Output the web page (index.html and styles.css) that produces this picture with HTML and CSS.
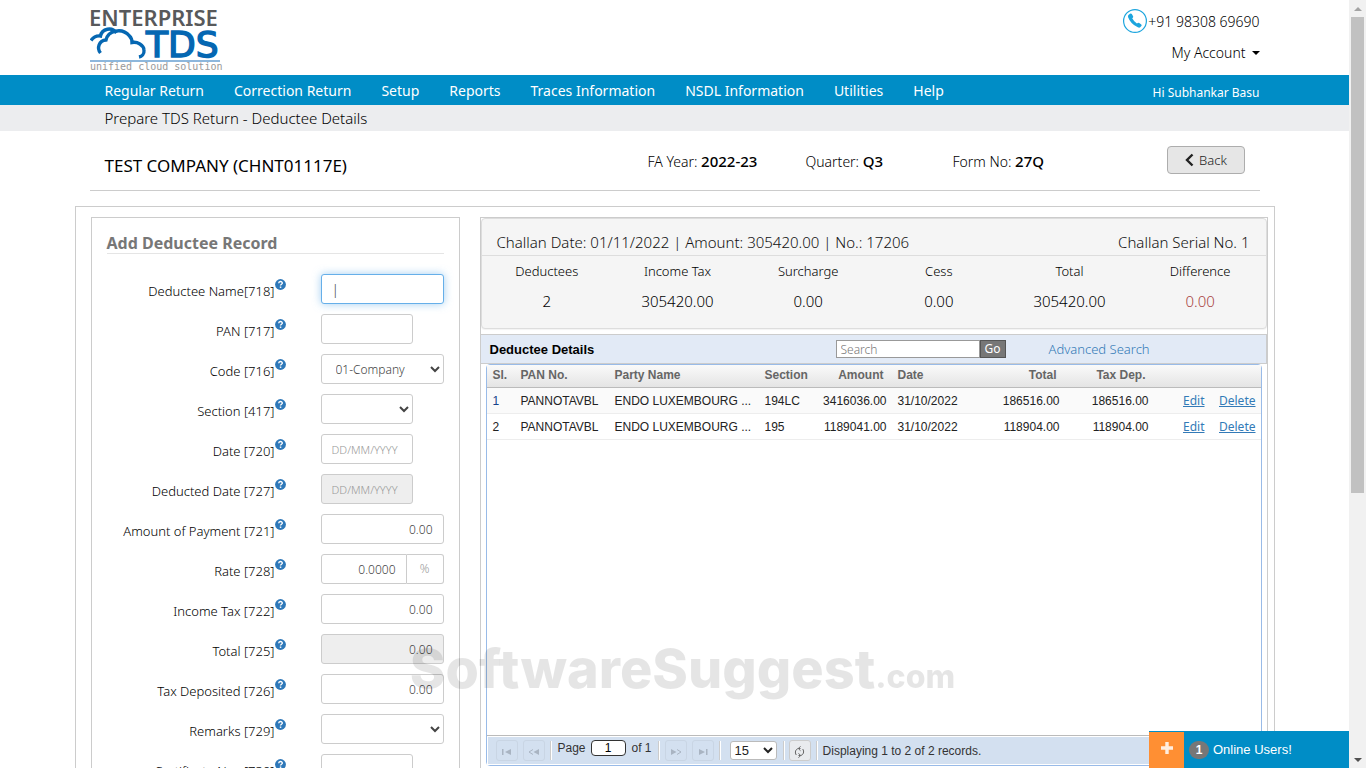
FILE: index.html
```html
<!DOCTYPE html>
<html lang="en">

<head>
    <meta charset="UTF-8">
    <meta name="viewport" content="width=device-width, initial-scale=1.0">
    <title>Prepare TDS Return - Deductee Details</title>
    <link rel="stylesheet" href="styles.css">
</head>

<body>
    <!-- shared icons -->
    <svg class="sprite" aria-hidden="true">
        <symbol id="help" viewBox="0 0 11 11">
            <circle cx="5.5" cy="5.5" r="5.4" fill="#2e78b9" />
            <path d="M3.7 4.3C3.7 2 7.4 2 7.3 4.2C7.2 5.3 5.5 5.2 5.5 6.6" fill="none" stroke="#fff" stroke-width="1.4" />
            <rect x="4.8" y="7.5" width="1.5" height="1.4" fill="#fff" />
        </symbol>
    </svg>

    <div class="page">
        <header class="container header">
            <a href="#" class="logo" aria-label="Enterprise TDS">
                <svg width="136" height="74" viewBox="0 0 136 74">
                    <text class="logo-name" x="-1" y="26">ENTERPRISE</text>
                    <text class="logo-tds" x="56" y="57">TDS</text>
                    <g transform="translate(0 6)" fill="none" stroke="#0567b2" stroke-width="3.4">
                        <path d="M1 34.500C3 31.500 6.500 29.500 10.500 30C12 22.500 22 20.500 26.500 27" />
                        <path d="M10.500 47C6.500 42 9 34.500 16 34C18 24.500 32 21 39.500 30C41 31.500 42 34 42 36.500C47.500 35.500 53.500 39 54 44C54.500 48 51.500 50.500 49 51" />
                    </g>
                    <rect x="0" y="60" width="130" height="2" fill="#8db7dc" />
                    <text class="logo-tag" x="0" y="70">unified cloud solution</text>
                </svg>
            </a>
            <div class="contact">
                <div class="phone">
                    <svg width="26" height="26" viewBox="0 0 26 26">
                        <circle cx="13" cy="13" r="11.400" fill="none" stroke="#1ca5de" stroke-width="1.200" />
                        <path d="M7 6.500L8.500 5.500Q9.300 5.200 9.800 6L11.100 8.200Q11.500 9 10.800 9.700L10.200 10.300Q11.800 13.500 14.900 15.600L15.800 15Q16.500 14.500 17.200 15L19.300 16.500Q20 17.200 19.400 18L18.200 19.300Q17.300 20 15.800 19.300Q8.500 16 6 9Q5.700 7.400 7 6.500Z" fill="#1ca5de" />
                    </svg>
                    <span>+91 98308 69690</span>
                </div>
                <a href="#" class="account">My Account <span class="caret"></span></a>
            </div>
        </header>

        <nav class="navbar">
            <div class="container nav-inner">
                <a href="#">Regular Return</a>
                <a href="#">Correction Return</a>
                <a href="#">Setup</a>
                <a href="#">Reports</a>
                <a href="#">Traces Information</a>
                <a href="#">NSDL Information</a>
                <a href="#">Utilities</a>
                <a href="#">Help</a>
                <span class="hello">Hi Subhankar Basu</span>
            </div>
        </nav>

        <div class="crumb">
            <div class="container">Prepare TDS Return - Deductee Details</div>
        </div>

        <div class="container company">
            <h1>TEST COMPANY (CHNT01117E)</h1>
            <div class="fact">FA Year: <b>2022-23</b></div>
            <div class="fact">Quarter: <b>Q3</b></div>
            <div class="fact">Form No: <b>27Q</b></div>
            <button type="button" class="back">
                <svg width="10" height="14" viewBox="0 0 10 14"><path d="M8.500 1.500L3 7L8.500 12.500" fill="none" stroke="#222" stroke-width="2.400" /></svg>
                Back
            </button>
        </div>

        <main class="box">
            <form class="record">
                <h2>Add Deductee Record</h2>
                <div class="row">
                    <label for="name">Deductee Name[718]</label><svg class="help"><use href="#help" /></svg>
                    <input type="text" id="name" class="field focused" value="|">
                </div>
                <div class="row">
                    <label for="pan">PAN [717]</label><svg class="help"><use href="#help" /></svg>
                    <input type="text" id="pan" class="field short">
                </div>
                <div class="row">
                    <label for="code">Code [716]</label><svg class="help"><use href="#help" /></svg>
                    <select id="code" class="field"><option>01-Company</option></select>
                </div>
                <div class="row">
                    <label for="section">Section [417]</label><svg class="help"><use href="#help" /></svg>
                    <select id="section" class="field short"><option></option></select>
                </div>
                <div class="row">
                    <label for="date">Date [720]</label><svg class="help"><use href="#help" /></svg>
                    <input type="text" id="date" class="field short" placeholder="DD/MM/YYYY">
                </div>
                <div class="row">
                    <label for="ded-date">Deducted Date [727]</label><svg class="help"><use href="#help" /></svg>
                    <input type="text" id="ded-date" class="field short" placeholder="DD/MM/YYYY" disabled>
                </div>
                <div class="row">
                    <label for="amount">Amount of Payment [721]</label><svg class="help"><use href="#help" /></svg>
                    <input type="text" id="amount" class="field num" value="0.00">
                </div>
                <div class="row">
                    <label for="rate">Rate [728]</label><svg class="help"><use href="#help" /></svg>
                    <div class="group">
                        <input type="text" id="rate" class="field num" value="0.0000">
                        <span class="addon">%</span>
                    </div>
                </div>
                <div class="row">
                    <label for="tax">Income Tax [722]</label><svg class="help"><use href="#help" /></svg>
                    <input type="text" id="tax" class="field num" value="0.00">
                </div>
                <div class="row">
                    <label for="total">Total [725]</label><svg class="help"><use href="#help" /></svg>
                    <input type="text" id="total" class="field num" value="0.00" disabled>
                </div>
                <div class="row">
                    <label for="deposited">Tax Deposited [726]</label><svg class="help"><use href="#help" /></svg>
                    <input type="text" id="deposited" class="field num" value="0.00">
                </div>
                <div class="row">
                    <label for="remarks">Remarks [729]</label><svg class="help"><use href="#help" /></svg>
                    <select id="remarks" class="field"><option></option></select>
                </div>
                <div class="row">
                    <label for="cert">Certificate Nos [730]</label><svg class="help"><use href="#help" /></svg>
                    <input type="text" id="cert" class="field short">
                </div>
            </form>

            <section class="details">
                <div class="challan">
                    <div class="challan-head">
                        <span>Challan Date: 01/11/2022 | Amount: 305420.00 | No.: 17206</span>
                        <span>Challan Serial No. 1</span>
                    </div>
                    <dl class="sums">
                        <div><dt>Deductees</dt><dd>2</dd></div>
                        <div><dt>Income Tax</dt><dd>305420.00</dd></div>
                        <div><dt>Surcharge</dt><dd>0.00</dd></div>
                        <div><dt>Cess</dt><dd>0.00</dd></div>
                        <div><dt>Total</dt><dd>305420.00</dd></div>
                        <div><dt>Difference</dt><dd class="diff">0.00</dd></div>
                    </dl>
                </div>

                <div class="toolbar">
                    <h3>Deductee Details</h3>
                    <div class="search">
                        <input type="text" placeholder="Search" aria-label="Search">
                        <button type="button">Go</button>
                    </div>
                    <a href="#">Advanced Search</a>
                </div>

                <div class="grid">
                    <div class="grid-body">
                        <table>
                            <colgroup>
                                <col class="c-sl"><col class="c-pan"><col><col class="c-sec"><col class="c-amt">
                                <col class="c-date"><col class="c-total"><col class="c-dep"><col class="c-edit"><col class="c-del">
                            </colgroup>
                            <thead>
                                <tr>
                                    <th>Sl.</th><th>PAN No.</th><th>Party Name</th><th>Section</th><th class="r">Amount</th>
                                    <th>Date</th><th class="r">Total</th><th class="r">Tax Dep.</th><th></th><th></th>
                                </tr>
                            </thead>
                            <tbody>
                                <tr class="odd">
                                    <td class="sel">1</td><td>PANNOTAVBL</td><td>ENDO LUXEMBOURG ...</td><td>194LC</td><td class="r">3416036.00</td>
                                    <td>31/10/2022</td><td class="r">186516.00</td><td class="r">186516.00</td>
                                    <td class="r"><a href="#">Edit</a></td><td class="r"><a href="#">Delete</a></td>
                                </tr>
                                <tr>
                                    <td>2</td><td>PANNOTAVBL</td><td>ENDO LUXEMBOURG ...</td><td>195</td><td class="r">1189041.00</td>
                                    <td>31/10/2022</td><td class="r">118904.00</td><td class="r">118904.00</td>
                                    <td class="r"><a href="#">Edit</a></td><td class="r"><a href="#">Delete</a></td>
                                </tr>
                            </tbody>
                        </table>
                    </div>
                    <div class="pager">
                        <button type="button" class="pg" aria-label="First" disabled>
                            <svg width="10" height="6" viewBox="0 0 10 6"><path d="M0 0H1.500V6H0ZM9 0V6L3 3Z" /></svg>
                        </button>
                        <button type="button" class="pg" aria-label="Previous" disabled>
                            <svg width="12" height="6" viewBox="0 0 12 6"><path d="M11 0V6L5.500 3Z" /><path d="M5 0.500L1 3L5 5.500" class="line" /></svg>
                        </button>
                        <span class="sep"></span>
                        <label for="pageno">Page</label>
                        <input type="text" id="pageno" value="1">
                        <span class="of">of 1</span>
                        <span class="sep"></span>
                        <button type="button" class="pg" aria-label="Next" disabled>
                            <svg width="12" height="6" viewBox="0 0 12 6"><path d="M1 0V6L6.500 3Z" /><path d="M7 0.500L11 3L7 5.500" class="line" /></svg>
                        </button>
                        <button type="button" class="pg" aria-label="Last" disabled>
                            <svg width="10" height="6" viewBox="0 0 10 6"><path d="M8 0H9.500V6H8ZM1 0V6L7 3Z" /></svg>
                        </button>
                        <span class="sep"></span>
                        <select aria-label="Rows per page"><option>15</option></select>
                        <span class="sep"></span>
                        <button type="button" class="pg refresh" aria-label="Refresh">
                            <svg width="11" height="12" viewBox="0 0 11 12"><path d="M6.500 2.500H4.500C1.500 3 0.500 6.500 2.300 9M6.500 0.300L4.300 2.500L6.500 4.700M4.500 9.500H6.500C9.500 9 10.500 5.500 8.700 3M4.500 7.300L6.700 9.500L4.500 11.700" /></svg>
                        </button>
                        <span class="sep"></span>
                        <span class="status">Displaying 1 to 2 of 2 records.</span>
                    </div>
                </div>
            </section>
        </main>
    </div>

    <div class="scrollbar" aria-hidden="true">
        <span class="arrow up"></span>
        <span class="thumb"></span>
        <span class="arrow down"></span>
    </div>

    <div class="online">
        <button type="button" class="plus" aria-label="Expand">
            <svg width="12" height="12" viewBox="0 0 12 12"><path d="M4.300 0H7.700V4.300H12V7.700H7.700V12H4.300V7.700H0V4.300H4.300Z" fill="#fff" fill-opacity=".85" /></svg>
        </button>
        <span class="badge">1</span>
        <span>Online Users!</span>
    </div>

    <div class="watermark">SoftwareSuggest<small>.com</small></div>
</body>

</html>
```
FILE: styles.css
```css
* {
    margin: 0;
    padding: 0;
    box-sizing: border-box;
}

body {
    display: flex;
    height: 100vh;
    overflow: hidden;
    background-color: #fff;
    color: #000;
    font-family: "Noto Sans", sans-serif;
    font-size: 14px;
    font-weight: 300;
}

button,
input,
select {
    font-family: inherit;
    font-weight: inherit;
}

a {
    color: #337ab7;
}

.sprite {
    position: absolute;
    width: 0;
    height: 0;
}

.page {
    flex: 1;
    min-width: 0;
}

.container {
    max-width: 1170px;
    margin: 0 auto;
}

/* header */
.header {
    display: flex;
    justify-content: space-between;
    height: 75px;
}

.logo-name {
    font: 600 22px "Noto Sans", sans-serif;
    fill: #58595b;
}

.logo-tds {
    font: 36px "DejaVu Sans", sans-serif;
    fill: #0567b2;
    stroke: #0567b2;
    stroke-width: 1.5px;
}

.logo-tag {
    font: 10px "DejaVu Sans Mono", monospace;
    fill: #999;
}

.contact {
    display: flex;
    flex-direction: column;
    align-items: flex-end;
    gap: 8px;
    padding-top: 7px;
}

.phone {
    display: flex;
    align-items: center;
    height: 28px;
}

.account {
    display: flex;
    align-items: center;
    gap: 6px;
    color: #000;
    text-decoration: none;
}

.caret {
    border: 4px solid transparent;
    border-top-color: #000;
    border-bottom: 0;
}

.navbar {
    background-color: #008dc6;
    color: #fff;
}

.nav-inner {
    display: flex;
    align-items: center;
    gap: 30px;
    height: 30px;
    padding-left: 15px;
    font-size: 14px;
    font-weight: 400;
}

.nav-inner a {
    color: #fff;
    text-decoration: none;
}

.hello {
    margin-left: auto;
    padding-top: 4px;
    font-size: 12px;
}

.crumb {
    background-color: #ecedef;
    font-size: 15px;
    line-height: 26px;
}

.crumb .container {
    padding-left: 15px;
}

.company {
    display: grid;
    grid-template-columns: 543px 158px 147px 1fr auto;
    align-items: center;
    height: 60px;
    padding: 0 15px 2px;
    border-bottom: 1px solid #ccc;
}

.company h1 {
    padding-top: 12px;
    font-size: 17px;
    font-weight: 400;
}

.company .fact {
    padding-top: 2px;
}

.company b {
    font-size: 15px;
    font-weight: 500;
}

.back {
    display: flex;
    align-items: center;
    justify-content: center;
    gap: 5px;
    width: 78px;
    height: 28px;
    border: 1px solid #adadad;
    border-radius: 4px;
    background-color: #e6e6e6;
    color: #222;
    font-size: 13px;
}

.box {
    display: flex;
    align-items: flex-start;
    gap: 20px;
    max-width: 1200px;
    margin: 15px auto 0;
    padding: 10px 6px 10px 15px;
    border: 1px solid #ccc;
}

/* left form */
.record {
    width: 369px;
    padding: 16px 15px 40px;
    border: 1px solid #ccc;
}

.record h2 {
    margin-bottom: 15px;
    border-bottom: 1px solid #e5e5e5;
    color: #777;
    font-size: 16px;
    font-weight: 700;
    line-height: 19px;
}

.row {
    display: grid;
    grid-template-columns: 168px 46px 1fr;
    height: 40px;
    padding-top: 5px;
}

.row label {
    padding-top: 7px;
    font-size: 13px;
    line-height: 20px;
    text-align: right;
    white-space: nowrap;
}

.help {
    width: 11px;
    height: 11px;
    margin-top: 5px;
}

.field {
    width: 100%;
    height: 30px;
    padding: 0 10px;
    border: 1px solid #ccc;
    border-radius: 3px;
    background-color: #fff;
    color: #444;
    font-size: 12px;
}

.field.short {
    width: 92px;
}

.field.num {
    text-align: right;
}

select.field {
    padding: 0 6px 0 10px;
}

.field.focused {
    border-color: #66afe9;
    outline: 0;
    box-shadow: 0 0 8px rgba(102, 175, 233, .6);
    font-size: 14px;
}

.field:disabled {
    background-color: #eee;
}

.field::placeholder {
    color: #999;
    font-size: 11px;
}

.group {
    display: flex;
    height: 30px;
}

.group .field {
    border-radius: 3px 0 0 3px;
}

.addon {
    flex: 0 0 37px;
    border: 1px solid #ccc;
    border-left: 0;
    border-radius: 0 3px 3px 0;
    color: #999;
    font-size: 12px;
    line-height: 28px;
    text-align: center;
}

/* right side */
.details {
    flex: 1;
    min-width: 0;
    padding-bottom: 6px;
    border: 1px solid #ccc;
}

.challan {
    height: 111px;
    border: 1px solid #ddd;
    border-radius: 4px;
    background-color: #f5f5f5;
    box-shadow: 0 1px 1px rgba(0, 0, 0, .05);
}

.challan-head {
    display: flex;
    justify-content: space-between;
    padding: 13px 16px 3px 15px;
    border-bottom: 1px solid #ddd;
    color: #111;
    font-size: 15px;
    line-height: 20px;
}

.sums {
    display: grid;
    grid-template-columns: repeat(6, 1fr);
    text-align: center;
}

.sums dt {
    padding-top: 5px;
    font-size: 13px;
    line-height: 20px;
}

.sums dd {
    padding-top: 10px;
    font-size: 15px;
    line-height: 20px;
}

.sums .diff {
    color: #a94442;
}

.toolbar {
    display: grid;
    grid-template-columns: 346px 213px 1fr;
    align-items: center;
    height: 30px;
    margin-top: 5px;
    padding-left: 9px;
    border: 1px solid #ccc;
    border-left: 0;
    background-color: #e2eaf6;
    font-size: 13px;
}

.toolbar h3 {
    font-family: "Liberation Sans", Arial, sans-serif;
    font-size: 13px;
    font-weight: 700;
}

.toolbar a {
    text-decoration: none;
}

.search {
    display: flex;
    height: 18px;
}

.search input {
    width: 144px;
    padding: 0 4px;
    border: 1px solid #999;
    font-size: 12px;
}

.search input::placeholder {
    color: #777;
}

.search button {
    width: 26px;
    border: 1px solid #555;
    background-color: #777;
    color: #fff;
    font-size: 12px;
    font-weight: 400;
    line-height: 16px;
}

.grid {
    margin: 0 5px;
    border: 1px solid #99bbe8;
    border-radius: 4px;
    font-family: "Liberation Sans", Arial, sans-serif;
    font-size: 12px;
    font-weight: 400;
}

.grid-body {
    height: 371px;
    border-bottom: 1px solid #bbb;
}

.grid table {
    width: 100%;
    border-spacing: 0;
    table-layout: fixed;
}

.grid th {
    height: 23px;
    padding: 0 6px 2px;
    border-bottom: 1px solid #bbb;
    background: linear-gradient(#fafafa, #e4e4e4);
    color: #666;
    font-weight: 700;
    text-align: left;
}

.grid td {
    height: 26px;
    padding: 0 5px 0 6px;
    border-bottom: 1px solid #ededed;
    color: #222;
    white-space: nowrap;
}

.grid .odd td {
    background-color: #fafafa;
}

.grid .r {
    padding-left: 0;
    text-align: right;
}

.grid th.r {
    padding-right: 8px;
}

.grid td.sel {
    color: #15428b;
}

.grid td a {
    font-family: "Noto Sans", sans-serif;
}

.c-sl {
    width: 28px;
}

.c-pan {
    width: 94px;
}

.c-sec {
    width: 60px;
}

.c-amt {
    width: 73px;
}

.c-date {
    width: 96px;
}

.c-total {
    width: 77px;
}

.c-dep {
    width: 89px;
}

.c-edit {
    width: 56px;
}

.c-del {
    width: 51px;
}

.pager {
    display: flex;
    align-items: center;
    height: 29px;
    padding-left: 8px;
    border: 1px solid #fff;
    background-color: #d3e0f0;
    color: #333;
}

.pg {
    display: flex;
    align-items: center;
    justify-content: center;
    width: 22px;
    height: 21px;
    margin-right: 5px;
    padding-top: 2px;
    border: 1px solid #c9d5e4;
    border-radius: 3px;
    background-color: transparent;
    fill: #a9b4c2;
}

.pg .line {
    fill: none;
    stroke: #a9b4c2;
}

.pg.refresh {
    margin: 0 5px 0 4px;
    border-color: #ccc;
    background-color: #e9ebee;
    fill: none;
    stroke: #666;
}

.sep {
    width: 2px;
    height: 19px;
    border-left: 1px solid #ccc;
    border-right: 1px solid #fff;
}

.pager label {
    margin: 0 5px 5px 6px;
}

.pager input {
    width: 35px;
    height: 16px;
    margin-bottom: 5px;
    border: 1px solid #333;
    border-radius: 4px;
    background-color: #fff;
    font-size: 12px;
    text-align: center;
}

.of {
    margin: 0 6px 5px;
}

.of + .sep {
    margin-right: 5px;
}

.pager select {
    width: 47px;
    height: 19px;
    margin: 0 6px 0 9px;
    border: 1px solid #bbb;
    border-radius: 3px;
    background-color: #fff;
    color: #222;
    font-size: 13px;
}

.status {
    margin-left: 5px;
}

/* scrollbar strip */
.scrollbar {
    display: flex;
    flex-direction: column;
    align-items: center;
    width: 17px;
    background-color: #f1f1f1;
}

.thumb {
    flex: 0 0 62%;
    width: 13px;
    background-color: #c1c1c1;
}

.arrow {
    margin: 7px 0 6px;
    border: 4px solid transparent;
}

.arrow.up {
    border-top: 0;
    border-bottom-color: #a3a3a3;
}

.arrow.down {
    margin-top: auto;
    border-top-color: #505050;
    border-bottom: 0;
}

/* online users tab */
.online {
    position: fixed;
    right: 17px;
    bottom: 0;
    display: flex;
    align-items: center;
    width: 200px;
    height: 37px;
    background-color: #008dc6;
    color: #fff;
    font-family: "Liberation Sans", Arial, sans-serif;
    font-size: 13px;
    font-weight: 400;
}

.plus {
    width: 35px;
    height: 36px;
    margin-right: 5px;
    border: 0;
    background-color: #ff8f33;
}

.badge {
    width: 20px;
    margin-right: 4px;
    border-radius: 10px;
    background-color: #777;
    font-size: 12px;
    font-weight: 700;
    line-height: 18px;
    text-align: center;
}

.watermark {
    position: fixed;
    left: 30%;
    bottom: 60px;
    color: rgba(0, 0, 0, .1);
    font-family: Inter, sans-serif;
    font-size: 54px;
    font-weight: 800;
    line-height: 62px;
    pointer-events: none;
}

.watermark small {
    font-size: 32px;
}
```
